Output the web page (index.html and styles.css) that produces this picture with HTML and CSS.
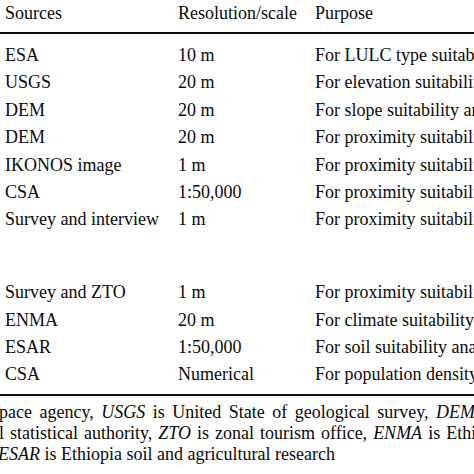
FILE: index.html
```html
<!DOCTYPE html>
<html>
<head>
<meta charset="utf-8">
<link rel="stylesheet" href="styles.css">
</head>
<body>
<div class="page">
  <div class="table">
    <div class="row head">
      <div class="c1">Sources</div>
      <div class="c2">Resolution/scale</div>
      <div class="c3">Purpose</div>
    </div>
    <div class="body">
      <div class="row"><div class="c1">ESA</div><div class="c2">10 m</div><div class="c3">For LULC type suitability analysis</div></div>
      <div class="row"><div class="c1">USGS</div><div class="c2">20 m</div><div class="c3">For elevation suitability analysis</div></div>
      <div class="row"><div class="c1">DEM</div><div class="c2">20 m</div><div class="c3">For slope suitability analysis</div></div>
      <div class="row"><div class="c1">DEM</div><div class="c2">20 m</div><div class="c3">For proximity suitability analysis</div></div>
      <div class="row"><div class="c1">IKONOS image</div><div class="c2">1 m</div><div class="c3">For proximity suitability analysis</div></div>
      <div class="row"><div class="c1">CSA</div><div class="c2">1:50,000</div><div class="c3">For proximity suitability analysis</div></div>
      <div class="row"><div class="c1">Survey and interview</div><div class="c2">1 m</div><div class="c3">For proximity suitability analysis</div></div>
      <div class="spacer"></div>
      <div class="row"><div class="c1">Survey and ZTO</div><div class="c2">1 m</div><div class="c3">For proximity suitability analysis</div></div>
      <div class="row"><div class="c1">ENMA</div><div class="c2">20 m</div><div class="c3">For climate suitability analysis</div></div>
      <div class="row"><div class="c1">ESAR</div><div class="c2">1:50,000</div><div class="c3">For soil suitability analysis</div></div>
      <div class="row"><div class="c1">CSA</div><div class="c2">Numerical</div><div class="c3">For population density analysis</div></div>
    </div>
  </div>
  <div class="notes">
    <div class="line l1">space agency, <i>USGS</i> is United State of geological survey, <i>DEM</i> is digital elevation model</div>
    <div class="line l2">Central statistical authority, <i>ZTO</i> is zonal tourism office, <i>ENMA</i> is Ethiopia National Meteorological Agency</div>
    <div class="line l3"><i>ESAR</i> is Ethiopia soil and agricultural research</div>
  </div>
</div>
</body>
</html>
```

FILE: styles.css
```css
html, body {
  margin: 0;
  padding: 0;
  background: #ffffff;
}
.page {
  width: 474px;
  height: 474px;
  overflow: hidden;
  font-family: "Liberation Serif", "Times New Roman", serif;
  font-size: 18px;
  color: #0a0a0a;
}
.table {
  width: 474px;
}
.row {
  display: grid;
  grid-template-columns: 173px 137px 1fr;
  padding-left: 5px;
  height: 27.4px;
  line-height: 27.4px;
  white-space: nowrap;
}
.row > div {
  overflow: hidden;
}
.head {
  box-sizing: border-box;
  height: 34.5px;
  margin-top: -1px;
  padding-top: 0.5px;
  border-bottom: 2.5px solid #111111;
}
.body {
  padding-top: 8.5px;
  padding-bottom: 5px;
  border-bottom: 2px solid #111111;
}
.spacer {
  height: 45.5px;
}
.notes {
  padding-top: 6.5px;
}
.line {
  white-space: nowrap;
  line-height: 21px;
  height: 21px;
}
.l1 {
  margin-left: -8px;
  word-spacing: 3px;
}
.l2 {
  margin-left: -49px;
  word-spacing: 1.5px;
}
.l3 {
  margin-left: -2px;
}
```
